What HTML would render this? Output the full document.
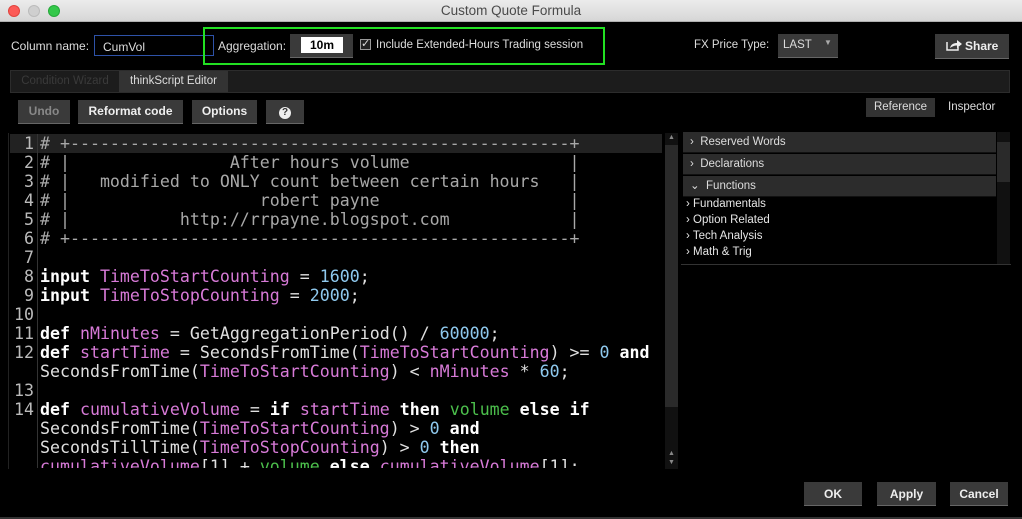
<!DOCTYPE html>
<html><head><meta charset="utf-8"><style>
*{box-sizing:border-box;margin:0;padding:0}
body{width:1022px;height:519px;background:#000;font-family:"Liberation Sans",sans-serif;color:#ddd;position:relative;overflow:hidden;font-size:12px}
.abs{position:absolute}
.title{left:0;top:0;width:1022px;height:22px;background:linear-gradient(#ececec,#d6d6d6);border-bottom:1px solid #b0b0b0;text-align:center;color:#4a4a4a;font-size:13.5px;line-height:22px}
.dot{top:5px;width:12px;height:12px;border-radius:50%}
.btn{background:#3a3a3a;color:#eee;font-weight:bold;font-size:12px;text-align:center;border-bottom:1px solid #666;white-space:nowrap}
.code{font-family:"DejaVu Sans Mono","Liberation Mono",monospace;font-size:16.6px;line-height:19px;white-space:pre}
.g{color:#a8a8a8}.k{color:#fff;font-weight:bold}.p{color:#d77ad7}.n{color:#8fc9ee}.v{color:#4cc04c}.t{color:#e0e0e0}
.ln{color:#bbb;text-align:right}
.sec{left:683px;width:313px;height:21px;background:#2c2c2c;color:#ddd;font-size:11.5px;line-height:21px;padding-left:7px;border-bottom:1px solid #111}
.it{left:686px;font-size:11.5px;color:#e6e6e6}
</style></head><body>
<div class="abs title">Custom Quote Formula</div>
<div class="abs dot" style="left:8px;background:#fc5b57;border:1px solid #e0443e"></div>
<div class="abs dot" style="left:28px;background:#cfcfcf;border:1px solid #bbb"></div>
<div class="abs dot" style="left:48px;background:#34c84a;border:1px solid #25a83a"></div>

<div class="abs" style="left:11px;top:39px;font-size:12px;color:#ddd">Column name:</div>
<div class="abs" style="left:94px;top:35px;width:120px;height:21px;border:1px solid #2e52a8;padding:4px 8px;font-size:12px">CumVol</div>
<div class="abs" style="left:203px;top:27px;width:402px;height:38px;border:2px solid #22e022"></div>
<div class="abs" style="left:218px;top:39px">Aggregation:</div>
<div class="abs" style="left:290px;top:34px;width:63px;height:24px;background:#3a3a3a;border-bottom:1px solid #666"></div>
<div class="abs" style="left:301px;top:37px;width:42px;height:16px;background:#fff;color:#000;font-weight:bold;text-align:center;font-size:12px;line-height:16px">10m</div>
<div class="abs" style="left:360px;top:39px;width:11px;height:11px;border:1px solid #999;background:#222;color:#ddd;font-size:11px;line-height:9px;text-align:center">✓</div>
<div class="abs" style="left:376px;top:39px;font-size:11.5px">Include Extended-Hours Trading session</div>
<div class="abs" style="left:694px;top:39px;font-size:11.5px">FX Price Type:</div>
<div class="abs" style="left:778px;top:34px;width:60px;height:24px;background:#3a3a3a;border-bottom:1px solid #666;padding:5px 5px;font-size:11.5px">LAST <span style="position:absolute;left:46px;top:4px;font-size:8px;color:#aaa">▼</span></div>
<div class="abs btn" style="left:935px;top:34px;width:74px;height:25px;line-height:24px;font-size:12px"><svg width="16" height="12" viewBox="0 0 16 12" style="vertical-align:-1px"><path d="M1 3v8h11v-3" fill="none" stroke="#eee" stroke-width="1.5"/><path d="M4 9c1-4 4-5 7-5V1l5 4-5 4V6.5c-3 0-5 1-7 2.5z" fill="#eee"/></svg> Share</div>

<div class="abs" style="left:10px;top:70px;width:1000px;height:23px;background:#1c1c1c;border:1px solid #2c2c2c"></div>
<div class="abs" style="left:11px;top:71px;width:108px;height:21px;color:#3a3a3a;font-size:11.5px;line-height:21px;text-align:center">Condition Wizard</div>
<div class="abs" style="left:119px;top:71px;width:109px;height:21px;background:#333;color:#ddd;font-size:11.5px;line-height:21px;text-align:center">thinkScript Editor</div>

<div class="abs btn" style="left:18px;top:100px;width:52px;height:24px;line-height:23px;color:#888">Undo</div>
<div class="abs btn" style="left:78px;top:100px;width:105px;height:24px;line-height:23px">Reformat code</div>
<div class="abs btn" style="left:192px;top:100px;width:65px;height:24px;line-height:23px">Options</div>
<div class="abs btn" style="left:266px;top:100px;width:38px;height:24px;line-height:23px"><span style="display:inline-block;width:12px;height:12px;border-radius:50%;background:#eee;color:#333;font-size:10px;line-height:12px;margin-top:6px">?</span></div>
<div class="abs" style="left:866px;top:98px;width:69px;height:19px;background:#333;font-size:11.5px;line-height:19px;text-align:center">Reference</div>
<div class="abs" style="left:948px;top:98px;font-size:11.5px;line-height:19px">Inspector</div>

<div class="abs" style="left:8px;top:133px;width:670px;height:336px;background:#000;border-left:1px solid #222"></div>
<div class="abs" style="left:10px;top:134px;width:652px;height:19px;background:#222"></div>
<div class="abs" style="left:37px;top:134px;width:1px;height:334px;background:#333"></div>
<div class="abs" style="left:665px;top:133px;width:13px;height:336px;background:#111"></div>
<div class="abs" style="left:665px;top:145px;width:13px;height:262px;background:#2a2a2a"></div>
<div class="abs" style="left:668px;top:134px;font-size:7px;color:#888">▲</div>
<div class="abs" style="left:668px;top:450px;font-size:7px;color:#888">▲</div>
<div class="abs" style="left:668px;top:459px;font-size:7px;color:#888">▼</div>

<div class="abs code ln" style="left:8px;top:134px;width:26px;height:334px;overflow:hidden">1
2
3
4
5
6
7
8
9
10
11
12

13
14



</div>
<div class="abs code" style="left:40px;top:134px;width:625px;height:334px;overflow:hidden"><span class="g"># +--------------------------------------------------+
# |                After hours volume                |
# |   modified to ONLY count between certain hours   |
# |                   robert payne                   |
# |           http://rrpayne.blogspot.com            |
# +--------------------------------------------------+</span>

<span class="k">input</span> <span class="p">TimeToStartCounting</span> <span class="t">=</span> <span class="n">1600</span><span class="t">;</span>
<span class="k">input</span> <span class="p">TimeToStopCounting</span> <span class="t">=</span> <span class="n">2000</span><span class="t">;</span>

<span class="k">def</span> <span class="p">nMinutes</span> <span class="t">= GetAggregationPeriod() /</span> <span class="n">60000</span><span class="t">;</span>
<span class="k">def</span> <span class="p">startTime</span> <span class="t">= SecondsFromTime(</span><span class="p">TimeToStartCounting</span><span class="t">) &gt;=</span> <span class="n">0</span> <span class="k">and</span>
<span class="t">SecondsFromTime(</span><span class="p">TimeToStartCounting</span><span class="t">) &lt;</span> <span class="p">nMinutes</span> <span class="t">*</span> <span class="n">60</span><span class="t">;</span>

<span class="k">def</span> <span class="p">cumulativeVolume</span> <span class="t">=</span> <span class="k">if</span> <span class="p">startTime</span> <span class="k">then</span> <span class="v">volume</span> <span class="k">else if</span>
<span class="t">SecondsFromTime(</span><span class="p">TimeToStartCounting</span><span class="t">) &gt;</span> <span class="n">0</span> <span class="k">and</span>
<span class="t">SecondsTillTime(</span><span class="p">TimeToStopCounting</span><span class="t">) &gt;</span> <span class="n">0</span> <span class="k">then</span>
<span class="p">cumulativeVolume</span><span class="t">[1] +</span> <span class="v">volume</span> <span class="k">else</span> <span class="p">cumulativeVolume</span><span class="t">[1];</span></div>

<div class="abs" style="left:681px;top:131px;width:330px;height:134px;background:#000;border-bottom:1px solid #333"></div>
<div class="abs sec" style="top:132px">›&nbsp; Reserved Words</div>
<div class="abs sec" style="top:154px">›&nbsp; Declarations</div>
<div class="abs sec" style="top:176px">⌄&nbsp; Functions</div>
<div class="abs it" style="top:198px">› Fundamentals</div>
<div class="abs it" style="top:214px">› Option Related</div>
<div class="abs it" style="top:230px">› Tech Analysis</div>
<div class="abs it" style="top:246px">› Math &amp; Trig</div>
<div class="abs" style="left:997px;top:132px;width:13px;height:132px;background:#111"></div>
<div class="abs" style="left:997px;top:142px;width:13px;height:40px;background:#2a2a2a"></div>

<div class="abs btn" style="left:804px;top:482px;width:58px;height:24px;line-height:24px">OK</div>
<div class="abs btn" style="left:877px;top:482px;width:59px;height:24px;line-height:24px">Apply</div>
<div class="abs btn" style="left:950px;top:482px;width:58px;height:24px;line-height:24px">Cancel</div>
<div class="abs" style="left:0;top:517px;width:1022px;height:2px;background:#333"></div>
</body></html>
